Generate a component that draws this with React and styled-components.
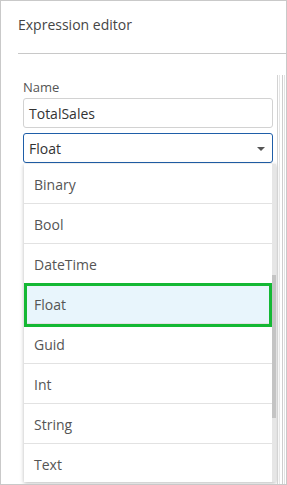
import React from "react";
import styled, { createGlobalStyle } from "styled-components";

const Global = createGlobalStyle`
  html, body { margin: 0; padding: 0; background: #fff; }
  body { font-family: "Open Sans", "Noto Sans", sans-serif; }
  * { box-sizing: border-box; }
`;

const Frame = styled.div`
  width: 287px;
  height: 485px;
  border: 1px solid #c9c9c9;
  background: #fff;
  overflow: hidden;
  display: flex;
  flex-direction: column;
`;

const Header = styled.div`
  margin-left: 17px;
  height: 53px;
  padding-top: 14px;
  border-bottom: 1px solid #c8c8c8;
  font-size: 14px;
  line-height: normal;
  color: #454545;
  flex: none;
`;

const Body = styled.div`
  display: flex;
  flex: 1;
  min-height: 0;
`;

const Main = styled.div`
  width: 275px;
  padding: 24px 0 0 22px;
  display: flex;
  flex-direction: column;
`;

const Rails = styled.div`
  flex: 1;
  margin-top: 21px;
  background:
    linear-gradient(to right,
      transparent 0, transparent 1px,
      #d3d3d3 1px, #d3d3d3 2px,
      transparent 2px, transparent 3px,
      #e6e6e6 3px, #e6e6e6 4px,
      transparent 4px, transparent 6px,
      #cdcdcd 6px, #cdcdcd 7px,
      transparent 7px, transparent 8px,
      #e2e2e2 8px, #e2e2e2 9px,
      transparent 9px);
`;

const Label = styled.div`
  font-size: 13px;
  line-height: 18px;
  color: #555;
  margin-bottom: 2px;
`;

const Field = styled.div`
  width: 250px;
  height: 30px;
  border: 1px solid ${(p) => (p.$focused ? "#1f5ea8" : "#d2d2d2")};
  border-radius: 3px;
  padding: 0 7px 0 5px;
  display: flex;
  align-items: center;
  justify-content: space-between;
  font-size: 14px;
  color: #333;
  margin-top: ${(p) => (p.$focused ? "5px" : "0")};
`;

const Caret = styled.span`
  width: 0;
  height: 0;
  border-left: 4px solid transparent;
  border-right: 4px solid transparent;
  border-top: 4px solid #555;
  margin-top: 1px;
`;

const List = styled.div`
  margin: 1px 0 0 1px;
  width: 252px;
  height: 318px;
  display: flex;
  background: #fff;
  box-shadow: 0 1px 4px rgba(0, 0, 0, 0.28);
  overflow: hidden;
`;

const Items = styled.div`
  width: 248px;
  display: flex;
  flex-direction: column;
`;

const Item = styled.div`
  position: relative;
  flex: none;
  height: 40px;
  padding: 1px 0 0 10px;
  border-bottom: 1px solid #e2e2e2;
  display: flex;
  align-items: center;
  font-size: 14px;
  color: #555;
  background: ${(p) => (p.$selected ? "#e8f5fc" : "#fff")};
  z-index: ${(p) => (p.$selected ? 1 : "auto")};

  &::after {
    content: "";
    display: ${(p) => (p.$selected ? "block" : "none")};
    position: absolute;
    top: -1px;
    bottom: -4px;
    left: 0;
    right: 0;
    border: 3px solid #14b834;
  }
`;

const Track = styled.div`
  width: 4px;
  background: #e6e6e6;
  display: flex;
  flex-direction: column;
`;

const Thumb = styled.div`
  margin-top: 111px;
  height: 143px;
  background: #c4c4c4;
`;

const types = ["Binary", "Bool", "DateTime", "Float", "Guid", "Int", "String", "Text"];

export default function App() {
  const selected = "Float";
  return (
    <>
      <Global />
      <Frame>
        <Header>Expression editor</Header>
        <Body>
          <Main>
            <Label>Name</Label>
            <Field>TotalSales</Field>
            <Field $focused>
              <span>{selected}</span>
              <Caret />
            </Field>
            <List>
              <Items>
                {types.map((t) => (
                  <Item key={t} $selected={t === selected}>
                    {t}
                  </Item>
                ))}
              </Items>
              <Track>
                <Thumb />
              </Track>
            </List>
          </Main>
          <Rails />
        </Body>
      </Frame>
    </>
  );
}
